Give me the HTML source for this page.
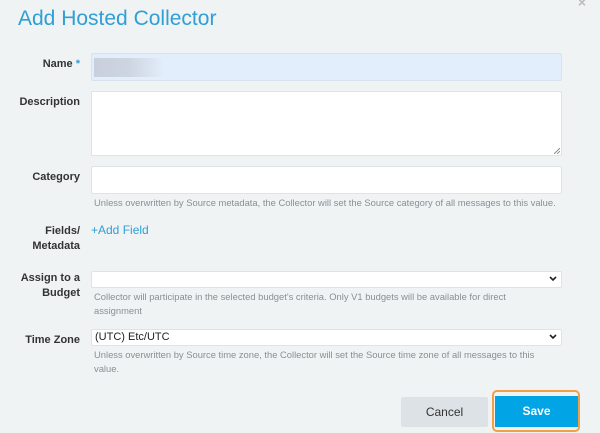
<!DOCTYPE html>
<html><head><style>
body{margin:0;width:600px;height:433px;background:#eff3f4;font-family:"Liberation Sans",sans-serif;position:relative;overflow:hidden}
.a{position:absolute}
.t{left:18px;top:7px;font-size:21px;color:#2f9fd5}
.l{right:520px;font-size:11px;font-weight:bold;color:#333;text-align:right;line-height:15px}
.i{left:91px;width:469px;background:#fff;border:1px solid #dde3e6;border-radius:2px}
.h{left:94px;font-size:9.4px;color:#8a8f93;line-height:14px;width:480px;white-space:nowrap}
.sel{font-size:11px;color:#222}
.chev{right:4px;top:4px}
</style></head><body>
<div class="a t">Add Hosted Collector</div>
<div class="a" style="right:14px;top:-6px;color:#bbb;font-size:14px;font-weight:bold">×</div>
<div class="a l" style="top:57px">Name <span style="color:#2f9fd5">*</span></div>
<div class="a i" style="top:53px;height:26px;background:#e2eefb;border-color:#d6e3ee"></div>
<div class="a" style="left:94px;top:58px;width:70px;height:19px;background:linear-gradient(90deg,#c9d0dc 0%,#cdd5e0 50%,#e2eefb 100%)"></div>
<div class="a l" style="top:95px">Description</div>
<div class="a i" style="top:91px;height:63px"><svg class="a" style="right:1px;bottom:1px" width="6" height="6"><path d="M0 6L6 0M3 6L6 3" stroke="#777" stroke-width="0.8"/></svg></div>
<div class="a l" style="top:170px">Category</div>
<div class="a i" style="top:166px;height:26px"></div>
<div class="a h" style="top:196px">Unless overwritten by Source metadata, the Collector will set the Source category of all messages to this value.</div>
<div class="a l" style="top:224px">Fields/<br>Metadata</div>
<div class="a" style="left:91px;top:223px;font-size:12px;color:#2f9fd5">+Add Field</div>
<div class="a l" style="top:271px">Assign to a<br>Budget</div>
<div class="a i" style="top:271px;height:15px"><svg class="a chev" width="8" height="6"><path d="M1 1L4 4L7 1" stroke="#222" stroke-width="1.6" fill="none"/></svg></div>
<div class="a h" style="top:290px">Collector will participate in the selected budget's criteria. Only V1 budgets will be available for direct<br>assignment</div>
<div class="a l" style="top:333px">Time Zone</div>
<div class="a i sel" style="top:329px;height:15px;line-height:15px"><span style="padding-left:3px">(UTC) Etc/UTC</span><svg class="a chev" width="8" height="6"><path d="M1 1L4 4L7 1" stroke="#222" stroke-width="1.6" fill="none"/></svg></div>
<div class="a h" style="top:348px">Unless overwritten by Source time zone, the Collector will set the Source time zone of all messages to this<br>value.</div>
<div class="a" style="left:401px;top:397px;width:87px;height:30px;background:#dce2e6;border-radius:2px;font-size:12px;color:#333;text-align:center;line-height:30px">Cancel</div>
<div class="a" style="left:492px;top:390px;width:84px;height:38px;border:2px solid #f0a049;border-radius:5px"></div>
<div class="a" style="left:495px;top:396px;width:83px;height:31px;background:#01a4e4;font-size:12px;font-weight:bold;color:#fff;text-align:center;line-height:31px">Save</div>
</body></html>
